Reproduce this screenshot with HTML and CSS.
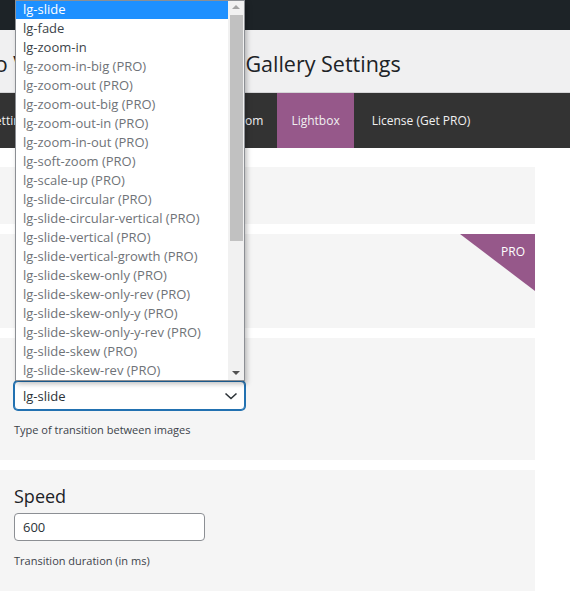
FILE: index.html
```html
<!DOCTYPE html>
<html lang="en">
  <head>
    <meta charset="UTF-8" />
    <meta name="viewport" content="width=device-width, initial-scale=1.0" />
    <title>Photo Video Gallery Settings</title>
    <link rel="stylesheet" href="styles.css">
  </head>
  <body>
    <div class="adminbar"></div>

    <div class="page-head">
      <h1 class="page-title">Photo Video Sliders, Lightbox Gallery Settings</h1>
    </div>

    <nav class="tabs">
      <a class="tab" href="#">General Settings</a>
      <a class="tab" href="#">Galleries</a>
      <a class="tab" href="#">Thumbnails</a>
      <a class="tab" href="#">Zoom</a>
      <a class="tab active" href="#">Lightbox</a>
      <a class="tab" href="#">License (Get PRO)</a>
    </nav>

    <main class="content">
      <section class="card card-short">
        <h3>Lightbox</h3>
      </section>

      <section class="card card-pro">
        <span class="pro-ribbon">PRO</span>
        <h3>Mode</h3>
        <div class="field-input">lg-slide</div>
      </section>

      <section class="card">
        <h3>Effect</h3>
        <div class="select-wrap">
          <div class="select-box open">
            <span>lg-slide</span>
            <svg class="chevron" width="14" height="8" viewBox="0 0 14 8">
              <path d="M1.5 1.5 L7 6.5 L12.5 1.5" fill="none" stroke="#2c3338" stroke-width="1.6" />
            </svg>
          </div>

          <div class="dropdown">
            <ul class="options">
              <li class="selected">lg-slide</li>
              <li>lg-fade</li>
              <li>lg-zoom-in</li>
              <li class="pro">lg-zoom-in-big (PRO)</li>
              <li class="pro">lg-zoom-out (PRO)</li>
              <li class="pro">lg-zoom-out-big (PRO)</li>
              <li class="pro">lg-zoom-out-in (PRO)</li>
              <li class="pro">lg-zoom-in-out (PRO)</li>
              <li class="pro">lg-soft-zoom (PRO)</li>
              <li class="pro">lg-scale-up (PRO)</li>
              <li class="pro">lg-slide-circular (PRO)</li>
              <li class="pro">lg-slide-circular-vertical (PRO)</li>
              <li class="pro">lg-slide-vertical (PRO)</li>
              <li class="pro">lg-slide-vertical-growth (PRO)</li>
              <li class="pro">lg-slide-skew-only (PRO)</li>
              <li class="pro">lg-slide-skew-only-rev (PRO)</li>
              <li class="pro">lg-slide-skew-only-y (PRO)</li>
              <li class="pro">lg-slide-skew-only-y-rev (PRO)</li>
              <li class="pro">lg-slide-skew (PRO)</li>
              <li class="pro">lg-slide-skew-rev (PRO)</li>
            </ul>
            <div class="scrollbar">
              <span class="arrow arrow-up"></span>
              <span class="thumb"></span>
              <span class="arrow arrow-down"></span>
            </div>
          </div>
        </div>
        <p class="description">Type of transition between images</p>
      </section>

      <section class="card">
        <h3>Speed</h3>
        <input class="text-input" type="text" value="600" />
        <p class="description">Transition duration (in ms)</p>
      </section>
    </main>
  </body>
</html>
```

FILE: styles.css
```css
* {
  margin: 0;
  padding: 0;
  box-sizing: border-box;
  font-family: "Open Sans", "Noto Sans", sans-serif;
}

body {
  background: #fff;
  color: #1d2327;
  width: 570px;
  height: 592px;
  overflow: hidden;
}

.adminbar {
  height: 30px;
  background: #1d2327;
}

.page-head {
  height: 62px;
  background: #f0f0f1;
  padding-top: 20px;
  overflow: hidden;
}

.page-title {
  font-size: 21.5px;
  font-weight: 400;
  line-height: 28px;
  white-space: nowrap;
  margin-left: -52px;
  color: #1d2327;
}

/* tab navigation */
.tabs {
  display: flex;
  height: 56px;
  background: #333;
  border-top: 1px solid #d5d5d7;
  margin-left: -73px;
  white-space: nowrap;
}

.tab {
  display: flex;
  align-items: center;
  padding: 0 14px;
  color: #f0f0f1;
  font-size: 12px;
  text-decoration: none;
}

.tab.active {
  background: #96588a;
  margin-right: 4px;
}

/* cards */
.content {
  padding: 19px 35px 0 0;
}

.card {
  position: relative;
  background: #f5f5f5;
  padding: 14px 14px 21px;
  margin-bottom: 10px;
}

.card-short {
  height: 57px;
}

.card-pro {
  height: 94px;
  overflow: hidden;
}

.card h3 {
  font-size: 18px;
  font-weight: 400;
  line-height: 24px;
  margin-bottom: 5px;
  color: #1d2327;
}

.pro-ribbon {
  position: absolute;
  top: 0;
  right: 0;
  width: 75px;
  height: 57px;
  background: #96588a;
  clip-path: polygon(0 0, 100% 0, 100% 100%);
  color: #fff;
  font-size: 12px;
  text-align: right;
  padding: 9px 10px 0 0;
}

.field-input,
.text-input {
  display: block;
  width: 191px;
  height: 28px;
  border: 1px solid #8c8f94;
  border-radius: 4px;
  background: #fff;
  padding: 0 8px;
  font-size: 13px;
  line-height: 26px;
  color: #2c3338;
}

.card-pro .field-input {
  margin-left: 4px;
}

.description {
  margin-top: 11px;
  font-size: 11px;
  line-height: 18px;
  color: #3c434a;
}

/* select with its open list */
.select-wrap {
  position: relative;
  width: 231px;
}

.select-box {
  display: flex;
  align-items: center;
  justify-content: space-between;
  height: 29px;
  border: 1px solid #2271b1;
  border-radius: 4px;
  background: #fff;
  padding: 0 6px 0 8px;
  font-size: 13px;
  color: #2c3338;
  box-shadow: 0 0 0 1px #2271b1;
}

.dropdown {
  position: absolute;
  z-index: 10;
  left: 1px;
  right: 0;
  bottom: 100%;
  height: 381px;
  display: flex;
  background: #fff;
  border: 1px solid #8c8f94;
  box-shadow: 2px 3px 5px rgba(0, 0, 0, 0.25);
  overflow: hidden;
}

.options {
  flex: 1;
  list-style: none;
  margin-top: -1px;
}

.options li {
  height: 19px;
  line-height: 19px;
  padding-left: 7px;
  font-size: 13px;
  color: #3c434a;
  white-space: nowrap;
}

.options li.pro {
  color: #6f7378;
}

.options li.selected {
  background: #1e90ff;
  color: #fff;
}

.scrollbar {
  position: relative;
  width: 16px;
  background: #f1f1f1;
}

.thumb {
  position: absolute;
  left: 2px;
  right: 1px;
  top: 14px;
  height: 226px;
  background: #c1c1c1;
}

.arrow {
  position: absolute;
  left: 4px;
  width: 0;
  height: 0;
  border-left: 4px solid transparent;
  border-right: 4px solid transparent;
}

.arrow-up {
  top: 4px;
  border-bottom: 4px solid #a3a3a3;
}

.arrow-down {
  bottom: 5px;
  border-top: 4px solid #505050;
}
```
